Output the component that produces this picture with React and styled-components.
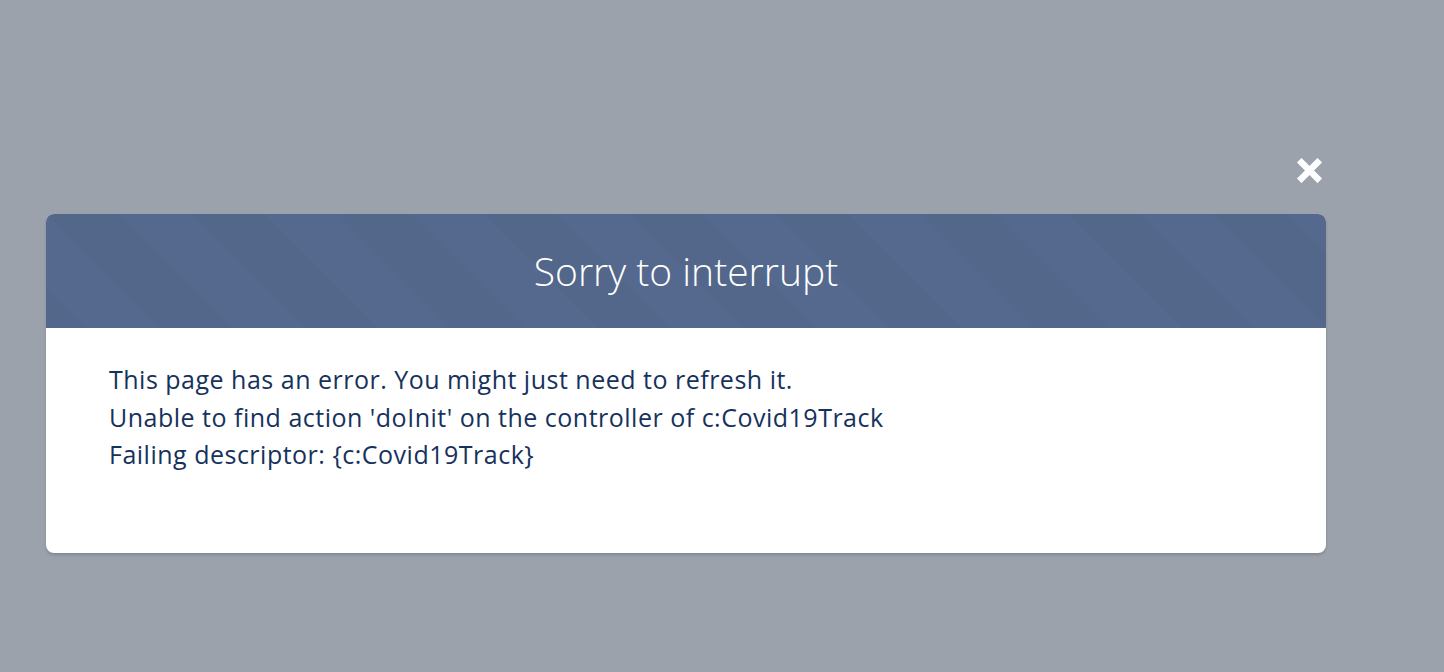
import styled, { createGlobalStyle } from "styled-components";

const GlobalStyle = createGlobalStyle`
  html, body {
    margin: 0;
    padding: 0;
    background: #9ba2ac;
  }
  body {
    font-family: "Open Sans", "Lato", sans-serif;
  }
`;

const CloseIcon = () => (
  <svg width="25" height="25" viewBox="0 0 25 25">
    <path
      d="M4.5 4.5 L20.5 20.5 M20.5 4.5 L4.5 20.5"
      stroke="#fff"
      strokeWidth="6.5"
      strokeLinecap="square"
    />
  </svg>
);

const App = () => {
  return (
    <Backdrop>
      <GlobalStyle />
      <ModalContainer>
        <CloseRow>
          <CloseButton title="Close">
            <CloseIcon />
          </CloseButton>
        </CloseRow>
        <Modal>
          <ModalHeader>
            <ModalTitle>Sorry to interrupt</ModalTitle>
          </ModalHeader>
          <ModalBody>
            <Line>This page has an error. You might just need to refresh it.</Line>
            <Line>
              Unable to find action 'doInit' on the controller of c:Covid19Track
            </Line>
            <Line>Failing descriptor: {"{c:Covid19Track}"}</Line>
          </ModalBody>
        </Modal>
      </ModalContainer>
    </Backdrop>
  );
};

const Backdrop = styled.div`
  width: 1444px;
  height: 672px;
  background: #9ba2ac;
  box-sizing: border-box;
  padding: 158px 0 0 46px;
`;

const ModalContainer = styled.div`
  width: 1280px;
  display: flex;
  flex-direction: column;
`;

const CloseRow = styled.div`
  display: flex;
  justify-content: flex-end;
  padding-right: 4px;
  height: 56px;
`;

const CloseButton = styled.button`
  border: 0;
  padding: 0;
  margin: 0;
  background: transparent;
  width: 25px;
  height: 25px;
  display: flex;
  cursor: pointer;
`;

const Modal = styled.div`
  border-radius: 8px;
  overflow: hidden;
  box-shadow: 0 2px 3px rgba(0, 0, 0, 0.16);
  background: #fff;
`;

const ModalHeader = styled.div`
  height: 114px;
  display: flex;
  align-items: center;
  justify-content: center;
  background-color: #54698d;
  background-image: linear-gradient(
    45deg,
    rgba(0, 0, 0, 0.018) 25%,
    transparent 25%,
    transparent 50%,
    rgba(0, 0, 0, 0.018) 50%,
    rgba(0, 0, 0, 0.018) 75%,
    transparent 75%,
    transparent
  );
  background-size: 146px 146px;
`;

const ModalTitle = styled.h2`
  margin: 0;
  color: #fff;
  font-family: "Open Sans", "Lato", sans-serif;
  font-weight: 300;
  font-size: 39px;
  line-height: 1.25;
`;

const ModalBody = styled.div`
  height: 225px;
  box-sizing: border-box;
  padding: 33px 63px;
  color: #16325c;
  font-size: 25px;
  line-height: 37.5px;
  letter-spacing: 0.5px;
`;

const Line = styled.div`
  font-family: "Open Sans", "Lato", sans-serif;
`;

export default App;
